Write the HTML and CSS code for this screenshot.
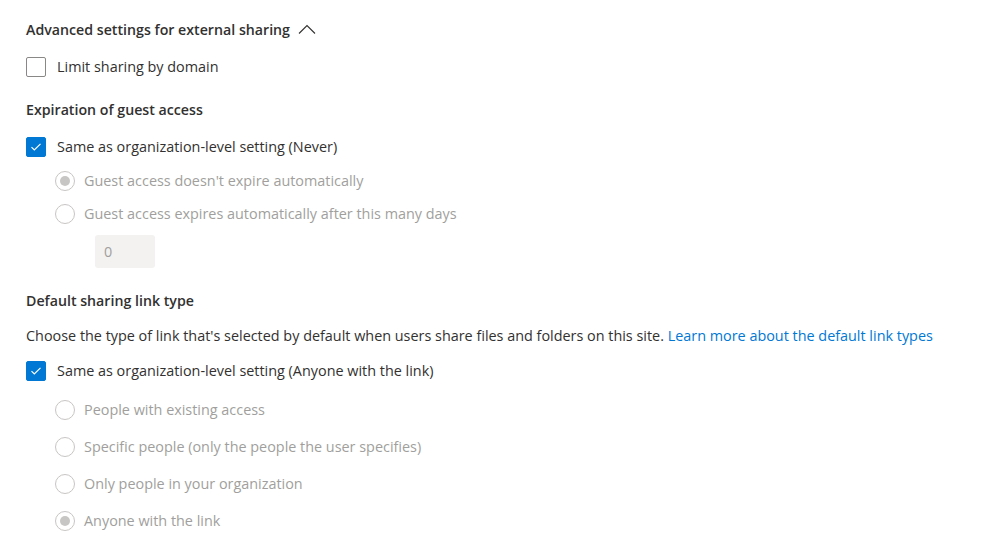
FILE: index.html
```html
<!DOCTYPE html>
<html>
<head>
<meta charset="utf-8">
<link rel="stylesheet" href="styles.css">
</head>
<body>
<div class="page">
  <div class="section-head">
    <span class="title">Advanced settings for external sharing</span>
    <svg class="chevron" width="18" height="10" viewBox="0 0 18 10"><path d="M1 9.5 L9 1.5 L17 9.5" fill="none" stroke="#323130" stroke-width="1.1"/></svg>
  </div>
  <label class="check-row r-limit"><span class="box"></span><span>Limit sharing by domain</span></label>

  <div class="title h-exp">Expiration of guest access</div>
  <label class="check-row r-same1"><span class="box checked"><svg width="12" height="10" viewBox="0 0 12 10"><path d="M1.5 5.2 L4.3 8 L10.5 1.8" fill="none" stroke="#fff" stroke-width="1.2"/></svg></span><span>Same as organization-level setting (Never)</span></label>
  <div class="radio-row r-g1"><span class="radio on"></span><span>Guest access doesn't expire automatically</span></div>
  <div class="radio-row r-g2"><span class="radio"></span><span>Guest access expires automatically after this many days</span></div>
  <div class="days">0</div>

  <div class="title h-def">Default sharing link type</div>
  <p class="desc">Choose the type of link that's selected by default when users share files and folders on this site. <a href="#">Learn more about the default link types</a></p>
  <label class="check-row r-same2"><span class="box checked"><svg width="12" height="10" viewBox="0 0 12 10"><path d="M1.5 5.2 L4.3 8 L10.5 1.8" fill="none" stroke="#fff" stroke-width="1.2"/></svg></span><span>Same as organization-level setting (Anyone with the link)</span></label>
  <div class="radio-row r-l1"><span class="radio"></span><span>People with existing access</span></div>
  <div class="radio-row r-l"><span class="radio"></span><span>Specific people (only the people the user specifies)</span></div>
  <div class="radio-row r-l"><span class="radio"></span><span>Only people in your organization</span></div>
  <div class="radio-row r-l"><span class="radio on"></span><span>Anyone with the link</span></div>
</div>
</body>
</html>
```
FILE: styles.css
```css
html, body { margin: 0; padding: 0; background: #fff; }
body {
  font-family: "Open Sans", "Noto Sans", sans-serif;
  font-size: 14.4px;
  color: #323130;
}
.page {
  display: flex;
  flex-direction: column;
  align-items: flex-start;
  padding: 20px 0 0 26px;
}
.title { font-weight: 600; font-size: 14.2px; line-height: 20px; height: 20px; }
.section-head { display: flex; align-items: center; gap: 8px; height: 20px; }
.chevron { margin-top: -3px; }
.check-row, .radio-row {
  display: flex;
  align-items: center;
  height: 20px;
  line-height: 20px;
}
.check-row { gap: 11px; }
.radio-row { gap: 9px; margin-left: 29px; color: #a19f9d; }
.box {
  width: 20px; height: 20px;
  box-sizing: border-box;
  border: 1px solid #8a8886;
  border-radius: 2px;
  display: flex; align-items: center; justify-content: center;
}
.box.checked { background: #0078d4; border-color: #0078d4; }
.radio {
  width: 20px; height: 20px;
  box-sizing: border-box;
  border: 1px solid #c8c6c4;
  border-radius: 50%;
  display: flex; align-items: center; justify-content: center;
}
.radio.on::after {
  content: "";
  width: 10px; height: 10px;
  border-radius: 50%;
  background: #c8c6c4;
}
.r-limit { margin-top: 17px; }
.h-exp { margin-top: 23px; }
.r-same1 { margin-top: 17px; }
.r-g1 { margin-top: 14px; }
.r-g2 { margin-top: 13px; }
.days {
  margin: 11px 0 0 69px;
  width: 60px; height: 33px;
  box-sizing: border-box;
  background: #f3f2f1;
  border-radius: 3px;
  color: #a19f9d;
  line-height: 33px;
  padding-left: 9px;
}
.h-def { margin-top: 23px; }
.desc { margin: 15px 0 0; line-height: 20px; height: 20px; white-space: nowrap; }
.desc a { color: #0078d4; text-decoration: none; }
.r-same2 { margin-top: 15px; }
.r-l1 { margin-top: 19px; }
.r-l { margin-top: 17px; }
```
